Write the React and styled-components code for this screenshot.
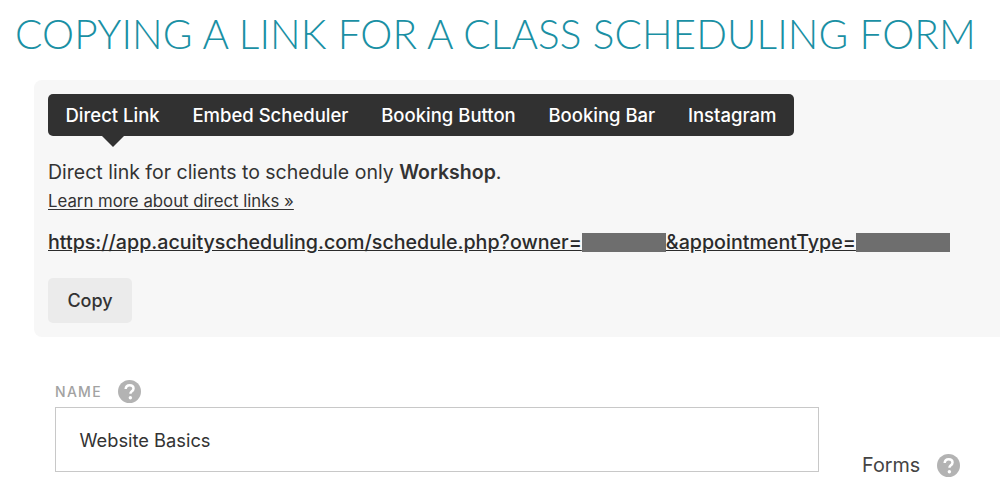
import React from "react";
import styled, { createGlobalStyle } from "styled-components";

const Global = createGlobalStyle`
  html, body { margin: 0; padding: 0; background: #fff; }
  body { font-family: Inter, "Liberation Sans", sans-serif; color: #333; }
`;
const Page = styled.div`
  width: 1000px; height: 485px; overflow: hidden; background: #fff;
`;
const Title = styled.h1`
  margin: 0; padding: 8px 0 0 15px; height: 80px; box-sizing: border-box;
  font-family: Lato, sans-serif; font-weight: 300; font-size: 40.5px; line-height: 52px;
  letter-spacing: 0.1px; color: #1a90a4; white-space: nowrap;
`;
const Panel = styled.section`
  margin-left: 34px; height: 257px; box-sizing: border-box;
  padding: 14px 14px 0; background: #f7f7f7; border-radius: 8px 0 0 8px;
`;
const Tabs = styled.nav`
  display: inline-flex; height: 42px; align-items: center; gap: 32.7px; padding: 0 18px 0 17.5px;
  background: #313131; border-radius: 5px;
`;
const Tab = styled.a`
  position: relative; color: #fff; font-size: 18.5px; font-weight: 500; line-height: 42px; white-space: nowrap;
  ${p => p.$active && `
    &::after {
      content: ""; position: absolute; left: 50%; bottom: -11px; margin-left: -11px;
      border-left: 11px solid transparent; border-right: 11px solid transparent; border-top: 11px solid #313131;
    }
  `}
`;
const Description = styled.p`
  margin: 23px 0 0; font-size: 19.5px; line-height: 27px; color: #333;
  strong { font-weight: 600; }
`;
const Learn = styled.a`
  display: block; margin-top: 3px; font-size: 16.8px; line-height: 24px; color: #333; text-decoration: underline; text-underline-offset: 2px;
`;
const Url = styled.a`
  display: flex; align-items: center; margin-top: 19px; height: 20px; font-size: 19.65px; font-weight: 500; color: #2b2b2b;
  text-decoration: underline; white-space: nowrap;
`;
const Redacted = styled.span`
  display: inline-block; width: ${p => p.$w}px; height: 19px; background: #6e6e6e;
`;
const CopyButton = styled.button`
  display: block; margin-top: 26px; width: 84px; height: 45px; border: 0; border-radius: 5px; background: #ebebeb;
  font-family: inherit; font-size: 18px; font-weight: 500; color: #333; padding: 0;
`;
const FormRow = styled.div`
  display: flex; padding: 41px 0 0 55px; align-items: flex-end;
`;
const Field = styled.div`
  width: 764px; flex: none;
`;
const Label = styled.label`
  display: flex; align-items: center; gap: 16px; height: 26px; margin-bottom: 3px;
  font-size: 14px; font-weight: 500; letter-spacing: 1.3px; color: #a2a2a2;
`;
const Input = styled.div`
  box-sizing: border-box; height: 65px; border: 1px solid #c8c8c8; padding: 0 23.5px; display: flex; align-items: center;
  font-size: 18.3px; color: #333; background: #fff;
`;
const SideLabel = styled.div`
  display: flex; align-items: center; gap: 17px; margin-left: 43px; margin-bottom: -6px; height: 26px;
  font-size: 19.8px; color: #444;
`;
const Help = styled.svg`
  width: 23px; height: 23px; flex: none;
`;
const HelpIcon = () => (
  <Help viewBox="0 0 24 24" aria-hidden="true">
    <circle cx="12" cy="12" r="12" fill="#b3b3b3" />
    <path d="M8 9.4C8.2 6.9 9.9 5.5 12.2 5.5c2.4 0 4 1.4 4 3.4 0 1.6-.9 2.4-2 3.2-.9.7-1.2 1.1-1.2 2.2" fill="none" stroke="#fff" strokeWidth="2.6" />
    <circle cx="12.9" cy="18.6" r="1.8" fill="#fff" />
  </Help>
);

export default function App() {
  return (
    <Page>
      <Global />
      <Title>COPYING A LINK FOR A CLASS SCHEDULING FORM</Title>
      <Panel>
        <Tabs>
          <Tab $active>Direct Link</Tab>
          <Tab>Embed Scheduler</Tab>
          <Tab>Booking Button</Tab>
          <Tab>Booking Bar</Tab>
          <Tab>Instagram</Tab>
        </Tabs>
        <Description>Direct link for clients to schedule only <strong>Workshop</strong>.</Description>
        <Learn>Learn more about direct links »</Learn>
        <Url>https://app.acuityscheduling.com/schedule.php?owner=<Redacted $w={84} />&amp;appointmentType=<Redacted $w={94} /></Url>
        <CopyButton>Copy</CopyButton>
      </Panel>
      <FormRow>
        <Field>
          <Label>NAME <HelpIcon /></Label>
          <Input>Website Basics</Input>
        </Field>
        <SideLabel>Forms <HelpIcon /></SideLabel>
      </FormRow>
    </Page>
  );
}
